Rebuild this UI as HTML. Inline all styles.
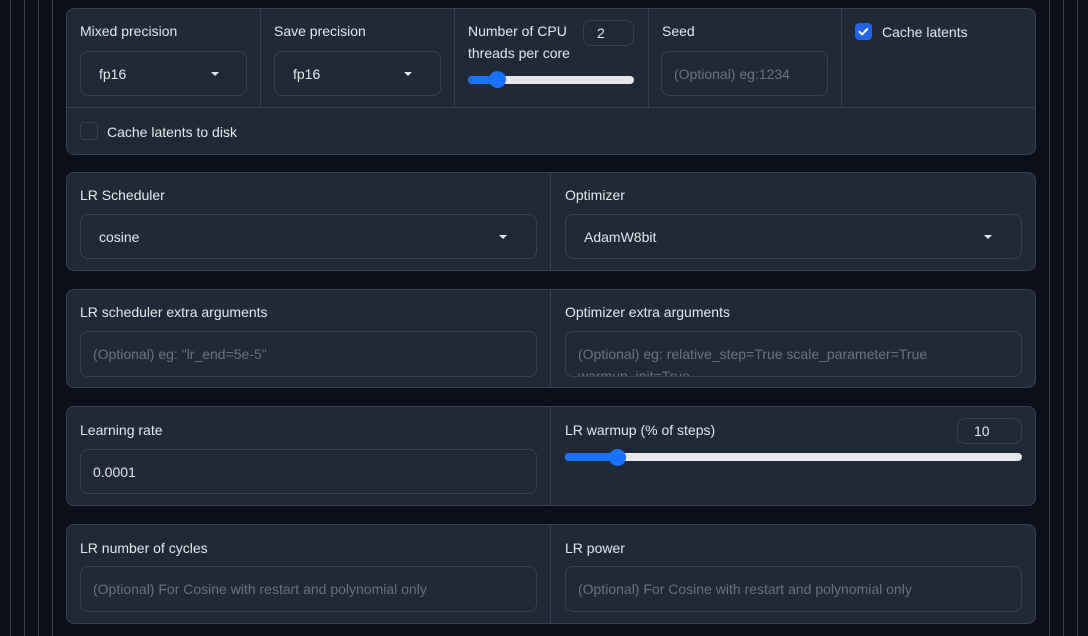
<!DOCTYPE html>
<html><head><style>
*{box-sizing:border-box;margin:0;padding:0}
body{width:1088px;height:636px;background:#0b0f19;position:relative;overflow:hidden;font-family:"Liberation Sans",sans-serif;font-size:14px;color:#e5e7eb}
.a{position:absolute}
.vl{position:absolute;top:0;height:636px;width:1px;background:#374151}
.p{position:absolute;left:66px;width:970px;background:#1f2937;border:1px solid #374151;border-radius:8px}
.d{position:absolute;background:#374151}
.in{position:absolute;border:1px solid #374151;border-radius:8px;background:#1f2937;padding-left:12px;display:flex;align-items:center;font-size:14px}
.ph{color:#6b7280}
.l{position:absolute;font-size:14px;color:#e5e7eb;white-space:nowrap}
.car{position:absolute;width:0;height:0;border-left:4.5px solid transparent;border-right:4.5px solid transparent;border-top:4.5px solid #e5e7eb}
.tr{position:absolute;height:8px;border-radius:4px;background:#e5e7eb}
.fl{position:absolute;height:8px;border-radius:4px;background:#1a73ff}
.th{position:absolute;width:17px;height:17px;border-radius:50%;background:#1a73ff}
</style></head><body>
<div class="vl" style="left:10px"></div><div class="vl" style="left:24px"></div><div class="vl" style="left:38px"></div><div class="vl" style="left:52px"></div>
<div class="vl" style="left:1049px"></div><div class="vl" style="left:1063px"></div><div class="vl" style="left:1077px"></div>

<div class="p" style="top:8px;height:147px"></div>
<div class="d" style="left:67px;top:107px;width:968px;height:1px"></div>
<div class="d" style="left:260px;top:9px;width:1px;height:98px"></div>
<div class="d" style="left:454px;top:9px;width:1px;height:98px"></div>
<div class="d" style="left:648px;top:9px;width:1px;height:98px"></div>
<div class="d" style="left:841px;top:9px;width:1px;height:98px"></div>
<div class="l" style="left:80px;top:23px">Mixed precision</div>
<div class="in" style="left:80px;top:51px;width:167px;height:45px;padding-left:18px">fp16</div><div class="car" style="left:211px;top:72px"></div>
<div class="l" style="left:274px;top:23px">Save precision</div>
<div class="in" style="left:274px;top:51px;width:167px;height:45px;padding-left:18px">fp16</div><div class="car" style="left:404px;top:72px"></div>
<div class="l" style="left:468px;top:20px;line-height:22px">Number of CPU<br>threads per core</div>
<div class="in" style="left:583px;top:20px;width:51px;height:26px;padding-left:13px">2</div>
<div class="tr" style="left:468px;top:76px;width:166px"></div><div class="fl" style="left:468px;top:76px;width:30px"></div><div class="th" style="left:489px;top:71px"></div>
<div class="l" style="left:662px;top:23px">Seed</div>
<div class="in ph" style="left:661px;top:51px;width:167px;height:45px">(Optional) eg:1234</div>
<div class="a" style="left:855px;top:23px;width:17px;height:17px;border-radius:4px;background:#2563eb"><svg width="17" height="17" viewBox="0 0 17 17"><path d="M4.5 8.8l2.6 2.6 5.2-5.4" stroke="#fff" stroke-width="2" fill="none" stroke-linecap="round" stroke-linejoin="round"/></svg></div>
<div class="l" style="left:882px;top:24px">Cache latents</div>
<div class="a" style="left:80px;top:122px;width:18px;height:18px;border-radius:4px;border:1px solid #374151;background:#1f2937"></div>
<div class="l" style="left:107px;top:124px">Cache latents to disk</div>

<div class="p" style="top:172px;height:99px"></div>
<div class="d" style="left:550px;top:173px;width:1px;height:97px"></div>
<div class="l" style="left:80px;top:187px">LR Scheduler</div>
<div class="in" style="left:80px;top:214px;width:457px;height:45px;padding-left:18px">cosine</div><div class="car" style="left:499px;top:235px"></div>
<div class="l" style="left:565px;top:187px">Optimizer</div>
<div class="in" style="left:565px;top:214px;width:457px;height:45px;padding-left:18px">AdamW8bit</div><div class="car" style="left:984px;top:235px"></div>

<div class="p" style="top:289px;height:99px"></div>
<div class="d" style="left:550px;top:290px;width:1px;height:97px"></div>
<div class="l" style="left:80px;top:304px">LR scheduler extra arguments</div>
<div class="in ph" style="left:80px;top:331px;width:457px;height:46px">(Optional) eg: "lr_end=5e-5"</div>
<div class="l" style="left:565px;top:304px">Optimizer extra arguments</div>
<div class="in ph" style="left:565px;top:331px;width:457px;height:46px;overflow:hidden;align-items:flex-start;padding-top:11px;line-height:22px;white-space:normal">(Optional) eg: relative_step=True scale_parameter=True warmup_init=True</div>

<div class="p" style="top:406px;height:100px"></div>
<div class="d" style="left:550px;top:407px;width:1px;height:98px"></div>
<div class="l" style="left:80px;top:422px">Learning rate</div>
<div class="in" style="left:80px;top:449px;width:457px;height:45px">0.0001</div>
<div class="l" style="left:565px;top:422px">LR warmup (% of steps)</div>
<div class="in" style="left:957px;top:418px;width:65px;height:26px;padding-left:16px">10</div>
<div class="tr" style="left:565px;top:453px;width:457px"></div><div class="fl" style="left:565px;top:453px;width:52px"></div><div class="th" style="left:609px;top:449px"></div>

<div class="p" style="top:524px;height:100px"></div>
<div class="d" style="left:550px;top:525px;width:1px;height:98px"></div>
<div class="l" style="left:80px;top:540px">LR number of cycles</div>
<div class="in ph" style="left:80px;top:566px;width:457px;height:46px">(Optional) For Cosine with restart and polynomial only</div>
<div class="l" style="left:565px;top:540px">LR power</div>
<div class="in ph" style="left:565px;top:566px;width:457px;height:46px">(Optional) For Cosine with restart and polynomial only</div>
</body></html>
